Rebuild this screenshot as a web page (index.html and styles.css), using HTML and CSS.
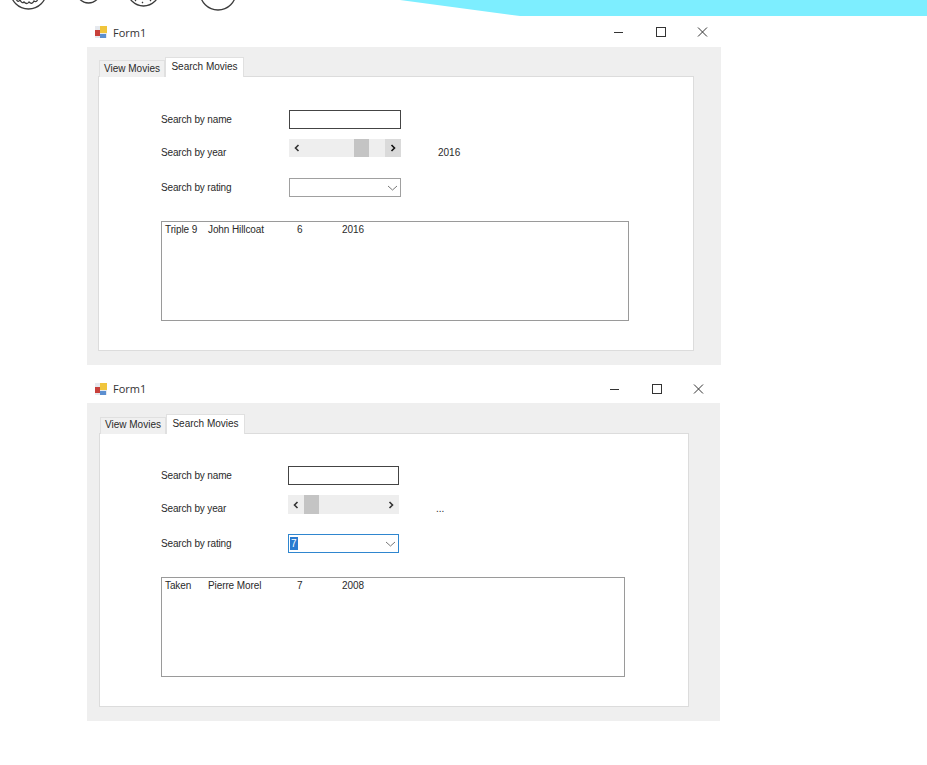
FILE: index.html
```html
<!DOCTYPE html>
<html lang="en">
<head>
    <meta charset="UTF-8">
    <title>Form1 screenshots</title>
    <link rel="stylesheet" href="styles.css">
</head>
<body>
    <!-- slide decoration cut off by the top edge -->
    <svg class="doodles" width="240" height="12" viewBox="0 0 240 12">
        <g fill="none" stroke="#3c3c3c" stroke-width="1.3">
            <circle cx="28.5" cy="-9" r="18"/>
            <path d="M16 -1 q2 4 4 1 q2 4 4 2 q3 3 5 0 q3 3 5 -1 q3 2 4 -3"/>
            <circle cx="88.5" cy="-9" r="12"/>
            <circle cx="143.5" cy="-10" r="16"/>
            <path d="M135 0 l1 1 M142 2 l1 1 M150 0 l1 1"/>
            <circle cx="218" cy="-8" r="18"/>
        </g>
    </svg>
    <svg class="banner" width="527" height="16" viewBox="0 0 527 16">
        <polygon points="0,0 527,0 527,16 120,16" fill="#7deeff"/>
    </svg>

    <section class="window window-a">
        <header class="titlebar">
            <svg class="app-icon" width="12" height="12" viewBox="0 0 12 12">
                <rect x="0" y="0" width="12" height="12" fill="#e6e9ee"/>
                <rect x="5" y="0" width="7" height="7" fill="#f0c53c"/>
                <rect x="0" y="4" width="5" height="6" fill="#c8403a"/>
                <rect x="5" y="8" width="6" height="4" fill="#5c8fd0"/>
            </svg>
            <span class="title">Form1</span>
            <svg class="caption" width="94" height="12" viewBox="0 0 94 12">
                <g fill="none" stroke="#333" stroke-width="1">
                    <path d="M0 6.5 h9"/>
                    <rect x="42.5" y="1.5" width="9" height="9"/>
                    <path d="M84 1.5 l9 9 M93 1.5 l-9 9"/>
                </g>
            </svg>
        </header>
        <div class="client">
            <div class="tabs">
                <span class="tab">View Movies</span>
                <span class="tab tab-active">Search Movies</span>
            </div>
            <div class="tab-page">
                <div class="row row-name">
                    <span class="label">Search by name</span>
                    <span class="textbox"></span>
                </div>
                <div class="row row-year">
                    <span class="label">Search by year</span>
                    <span class="scrollbar">
                        <span class="arrow">
                            <svg width="6" height="8" viewBox="0 0 6 8"><path d="M4.5 1 L1.5 4 L4.5 7" fill="none" stroke="#333" stroke-width="1.6"/></svg>
                        </span>
                        <span class="thumb thumb-right"></span>
                        <span class="arrow arrow-hot">
                            <svg width="6" height="8" viewBox="0 0 6 8"><path d="M1.5 1 L4.5 4 L1.5 7" fill="none" stroke="#111" stroke-width="1.6"/></svg>
                        </span>
                    </span>
                    <span class="value">2016</span>
                </div>
                <div class="row row-rating">
                    <span class="label">Search by rating</span>
                    <span class="combo">
                        <span class="combo-text"></span>
                        <svg width="11" height="6" viewBox="0 0 11 6"><path d="M1 1 L5.5 5 L10 1" fill="none" stroke="#777"/></svg>
                    </span>
                </div>
                <div class="listbox">
                    <span class="cell">Triple 9</span>
                    <span class="cell">John Hillcoat</span>
                    <span class="cell">6</span>
                    <span class="cell">2016</span>
                </div>
            </div>
        </div>
    </section>

    <section class="window window-b">
        <header class="titlebar">
            <svg class="app-icon" width="12" height="12" viewBox="0 0 12 12">
                <rect x="0" y="0" width="12" height="12" fill="#e6e9ee"/>
                <rect x="5" y="0" width="7" height="7" fill="#f0c53c"/>
                <rect x="0" y="4" width="5" height="6" fill="#c8403a"/>
                <rect x="5" y="8" width="6" height="4" fill="#5c8fd0"/>
            </svg>
            <span class="title">Form1</span>
            <svg class="caption" width="94" height="12" viewBox="0 0 94 12">
                <g fill="none" stroke="#333" stroke-width="1">
                    <path d="M0 6.5 h9"/>
                    <rect x="42.5" y="1.5" width="9" height="9"/>
                    <path d="M84 1.5 l9 9 M93 1.5 l-9 9"/>
                </g>
            </svg>
        </header>
        <div class="client">
            <div class="tabs">
                <span class="tab">View Movies</span>
                <span class="tab tab-active">Search Movies</span>
            </div>
            <div class="tab-page">
                <div class="row row-name">
                    <span class="label">Search by name</span>
                    <span class="textbox"></span>
                </div>
                <div class="row row-year">
                    <span class="label">Search by year</span>
                    <span class="scrollbar">
                        <span class="arrow">
                            <svg width="6" height="8" viewBox="0 0 6 8"><path d="M4.5 1 L1.5 4 L4.5 7" fill="none" stroke="#333" stroke-width="1.6"/></svg>
                        </span>
                        <span class="thumb thumb-left"></span>
                        <span class="arrow">
                            <svg width="6" height="8" viewBox="0 0 6 8"><path d="M1.5 1 L4.5 4 L1.5 7" fill="none" stroke="#333" stroke-width="1.6"/></svg>
                        </span>
                    </span>
                    <span class="value">...</span>
                </div>
                <div class="row row-rating">
                    <span class="label">Search by rating</span>
                    <span class="combo combo-focus">
                        <span class="combo-text"><span class="selected">7</span></span>
                        <svg width="11" height="6" viewBox="0 0 11 6"><path d="M1 1 L5.5 5 L10 1" fill="none" stroke="#777"/></svg>
                    </span>
                </div>
                <div class="listbox">
                    <span class="cell">Taken</span>
                    <span class="cell">Pierre Morel</span>
                    <span class="cell">7</span>
                    <span class="cell">2008</span>
                </div>
            </div>
        </div>
    </section>
</body>
</html>
```

FILE: styles.css
```css
body {
    margin: 0;
    background: #fff;
    font-family: "Liberation Sans", Arial, sans-serif;
    font-size: 10px;
    color: #2a2a2a;
    overflow: hidden;
}

.doodles {
    position: absolute;
    left: 0;
    top: 0;
}
.banner {
    position: absolute;
    left: 400px;
    top: 0;
}

/* the two captured windows */
.window {
    position: absolute;
    left: 87px;
    width: 634px;
}
.window-a {
    top: 22px;
}
.window-b {
    top: 378px;
    width: 633px;
}

.titlebar {
    height: 25px;
    box-sizing: border-box;
    display: flex;
    align-items: center;
    padding: 0 0 5px 8px;
}
.window-b .titlebar {
    padding-bottom: 4px;
}
.app-icon {
    margin-right: 6px;
}
.title {
    font-family: "Open Sans", sans-serif;
    font-size: 11px;
    color: #333;
}
.caption {
    margin-left: auto;
    margin-right: 13px;
}
.window-b .caption {
    margin-right: 16px;
}

.client {
    background: #efefef;
    height: 318px;
    padding: 10px 27px 14px 11px;
    box-sizing: border-box;
}
.window-b .client {
    padding: 11px 31px 14px 12px;
}

.tabs {
    display: flex;
    align-items: flex-end;
    height: 20px;
    position: relative;
    z-index: 1;
    margin-bottom: -1px;
}
.tab {
    height: 17px;
    line-height: 15px;
    width: 66px;
    text-align: center;
    margin-left: 1px;
    background: #f0f0f0;
    border: 1px solid #e0e0e0;
    border-bottom: none;
    box-sizing: border-box;
    white-space: nowrap;
}
.tab-active {
    height: 20px;
    line-height: 17px;
    width: 79px;
    margin-left: 0;
    background: #fff;
}
.window-b .tab {
    line-height: 13px;
}
.window-b .tab-active {
    line-height: 17px;
}

.tab-page {
    height: 275px;
    background: #fff;
    border: 1px solid #dcdcdc;
    box-sizing: border-box;
    padding: 33px 0 0 62px;
}
.window-b .tab-page {
    height: 274px;
    padding: 32px 0 0 61px;
}

.row {
    display: grid;
    grid-template-columns: 128px 112px 37px auto;
    align-items: center;
    height: 19px;
}
.window-b .row {
    grid-template-columns: 127px 111px 37px auto;
}
.row-year {
    margin-top: 10px;
}
.row-rating {
    margin-top: 20px;
}
.label {
    letter-spacing: -0.15px;
}
.row-year .label,
.value {
    padding-top: 7px;
}

.textbox {
    height: 19px;
    box-sizing: border-box;
    background: #fff;
    border: 1px solid #444;
}

.scrollbar {
    grid-column: 2;
    align-self: start;
    height: 18px;
    display: flex;
    justify-content: space-between;
    background: #eeeeee;
    position: relative;
}
.window-b .scrollbar {
    height: 19px;
}
.arrow {
    width: 16px;
    display: flex;
    align-items: center;
    justify-content: center;
}
.arrow-hot {
    background: #dadada;
}
.thumb {
    position: absolute;
    top: 0;
    bottom: 0;
    width: 15px;
    background: #c4c4c4;
}
.thumb-right {
    left: 65px;
}
.thumb-left {
    left: 16px;
}
.value {
    grid-column: 4;
}

.combo {
    grid-column: 2;
    height: 19px;
    box-sizing: border-box;
    display: flex;
    align-items: center;
    justify-content: space-between;
    padding: 0 2px 0 1px;
    background: #fff;
    border: 1px solid #a0a0a0;
}
.combo-focus {
    border-color: #2f86cf;
}
.combo-text {
    display: flex;
}
.selected {
    background: #2a7bd0;
    color: #fff;
    padding: 0 1px;
    line-height: 13px;
}

.listbox {
    width: 468px;
    height: 100px;
    margin-top: 24px;
    box-sizing: border-box;
    border: 1px solid #9a9a9a;
    background: #fff;
    display: grid;
    grid-template-columns: 43px 89px 45px auto;
    align-content: start;
    padding: 2px 0 0 3px;
}
.window-b .listbox {
    width: 464px;
}
.cell {
    letter-spacing: -0.1px;
}
```
